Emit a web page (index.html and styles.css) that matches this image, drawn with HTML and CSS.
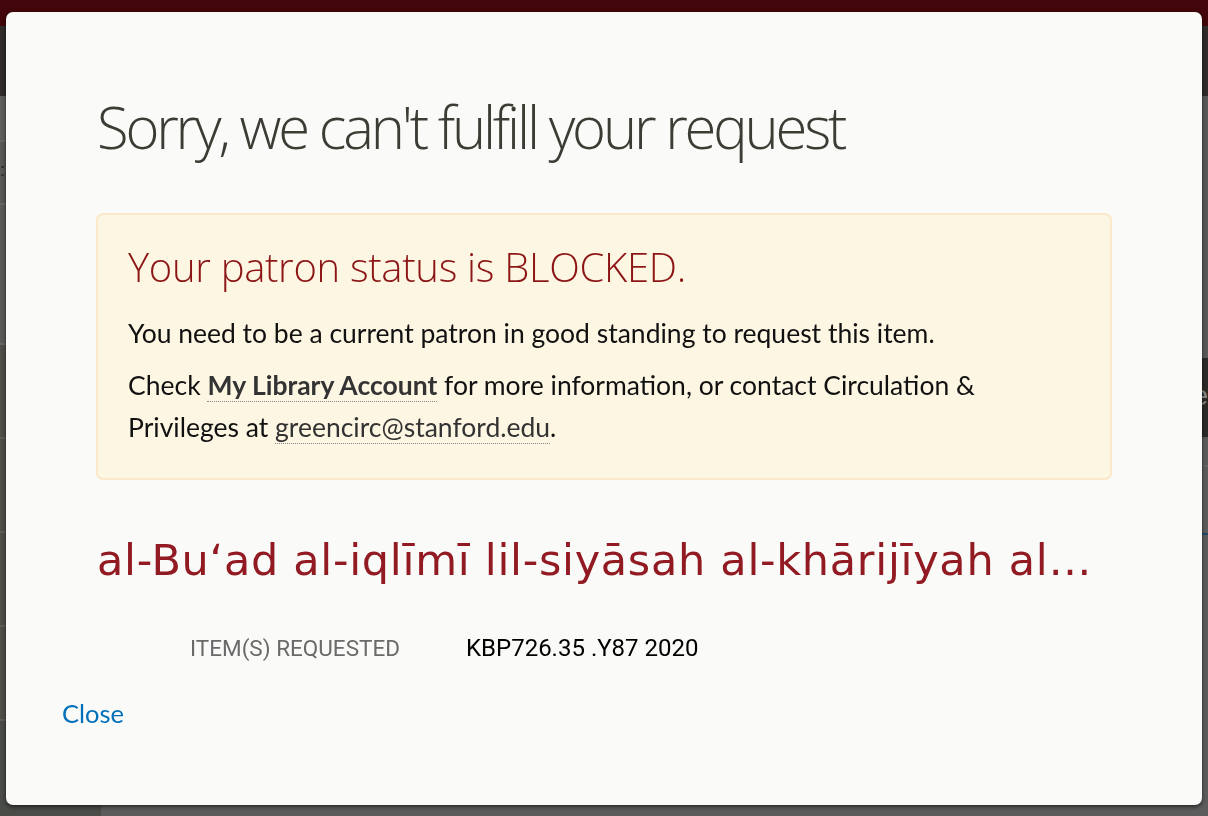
FILE: index.html
```html
<!DOCTYPE html>
<html lang="en">
<head>
<meta charset="utf-8">
<title>Request</title>
<link rel="stylesheet" href="styles.css">
</head>
<body>
<div class="page">
  <div class="masthead"></div>
  <div class="topnav"></div>
  <div class="content">
    <div class="sidebar">
      <div class="srow srow-a"></div>
      <div class="srow srow-b">:</div>
      <div class="srow srow-c"></div>
      <div class="srow srow-d"></div>
      <div class="srow srow-d"></div>
      <div class="srow srow-d"></div>
      <div class="srow srow-d"></div>
      <div class="srow srow-e"></div>
    </div>
    <div class="main">
      <div class="mrow mrow-a"></div>
      <div class="mrow mrow-dark">e</div>
      <div class="mrow mrow-b"></div>
      <div class="mrow mrow-blue"></div>
    </div>
  </div>
</div>

<div class="modal" role="dialog">
  <div class="modal-header">
    <h1 class="modal-title">Sorry, we can't fulfill your request</h1>
  </div>
  <div class="modal-body">
    <div class="alert">
      <h2 class="alert-heading">Your patron status is BLOCKED.</h2>
      <p class="alert-text">You need to be a current patron in good standing to request this item.</p>
      <p class="alert-text">Check <a class="acct-link" href="#">My Library Account</a> for more information, or contact Circulation &amp; Privileges at <a class="mail-link" href="#">greencirc@stanford.edu</a>.</p>
    </div>
    <h3 class="item-title">al-Buʻad al-iqlīmī lil-siyāsah al-khārijīyah al-Turkīyah tijāh al-Sharq al-Awsaṭ</h3>
    <dl class="item-row">
      <dt class="item-label">ITEM(S) REQUESTED</dt>
      <dd class="item-value">KBP726.35 .Y87 2020</dd>
    </dl>
  </div>
  <div class="modal-footer">
    <a class="close-link" href="#">Close</a>
  </div>
</div>
</body>
</html>
```

FILE: styles.css
```css
* { box-sizing: border-box; }

html, body {
  margin: 0;
  padding: 0;
  height: 100%;
}

body {
  background: #5b5b59;
  font-family: "Lato", "Open Sans", sans-serif;
  overflow: hidden;
}

/* dimmed backdrop page */
.page {
  height: 816px;
  display: flex;
  flex-direction: column;
}

.masthead {
  height: 26px;
  background: #42050a;
}

.topnav {
  height: 70px;
  background: #2f2c29;
}

.content {
  flex: 1;
  display: flex;
}

.sidebar {
  width: 101px;
  display: flex;
  flex-direction: column;
  border-right: 1px solid #474746;
}

.srow {
  border-bottom: 2px solid #666664;
  font-family: "Liberation Sans", sans-serif;
  color: #222;
  font-size: 18px;
}

.srow-a { height: 46px; background: #5e5e5c; }
.srow-b { height: 63px; background: #585856; padding: 18px 0 0 0; }
.srow-c { height: 140px; background: #5a5a58; }
.srow-d { height: 94px; background: #4f4e49; border-bottom-color: #5d5c57; }
.srow-e { flex: 1; background: #4a4c48; border-bottom: 0; }

.main {
  flex: 1;
  display: flex;
  flex-direction: column;
  background: #5c5c5c;
}

.mrow-a { height: 262px; background: #5a5a5a; }
.mrow-dark {
  height: 79px;
  background: #2c2a27;
  color: #8a8a88;
  font-family: "Liberation Sans", sans-serif;
  font-size: 28px;
  text-align: right;
  padding-top: 22px;
}
.mrow-b { height: 30px; border-bottom: 2px solid #666; }
.mrow-blue { height: 68px; border-bottom: 2px solid #1e4b6e; }

/* modal */
.modal {
  position: fixed;
  left: 6px;
  top: 12px;
  width: 1196px;
  height: 793px;
  background: #fafaf8;
  border-radius: 7px;
  box-shadow: 0 2px 4px rgba(0, 0, 0, 0.55), 0 0 1px rgba(0, 0, 0, 0.6);
  padding-top: 82px;
}

.modal-header {
  padding: 0 90px 0 91px;
}

.modal-title {
  margin: 0;
  font-family: "Open Sans", sans-serif;
  font-weight: 300;
  font-size: 58px;
  line-height: 66px;
  letter-spacing: -3.2px;
  color: #3d3c34;
}

.modal-body {
  padding: 53px 90px 0 90px;
}

.alert {
  background: #fdf6e3;
  border: 2px solid #fbe9c9;
  border-radius: 7px;
  padding: 27px 30px 30px 30px;
}

.alert-heading {
  margin: 0 0 20px 0;
  font-family: "Open Sans", sans-serif;
  font-weight: 300;
  font-size: 40px;
  line-height: 50px;
  letter-spacing: -0.3px;
  color: #8c1515;
}

.alert-text {
  margin: 0 0 10px 0;
  font-size: 26.5px;
  line-height: 42px;
  color: #111;
}

.alert-text:last-child {
  margin-bottom: 0;
}

.acct-link {
  font-weight: 700;
  color: #333;
  text-decoration: none;
  border-bottom: 1px dotted #888;
}

.mail-link {
  color: #333;
  text-decoration: none;
  border-bottom: 1px dotted #888;
}

.item-title {
  margin: 54px 12px 0 1px;
  font-family: "DejaVu Sans", sans-serif;
  font-weight: 400;
  font-size: 43px;
  line-height: 52px;
  letter-spacing: 0.7px;
  color: #921a22;
  white-space: nowrap;
  overflow: hidden;
  text-overflow: ellipsis;
}

.item-row {
  display: flex;
  align-items: baseline;
  margin: 48px 0 0 0;
  padding-left: 94px;
  font-family: "Roboto", sans-serif;
}

.item-label {
  margin: 0;
  width: 276px;
  font-size: 22.5px;
  color: #6a6a6a;
}

.item-value {
  margin: 0;
  font-size: 24px;
  color: #000;
}

.modal-footer {
  padding: 36px 0 0 56px;
}

.close-link {
  font-size: 25.5px;
  color: #0070ba;
  text-decoration: none;
}
```
